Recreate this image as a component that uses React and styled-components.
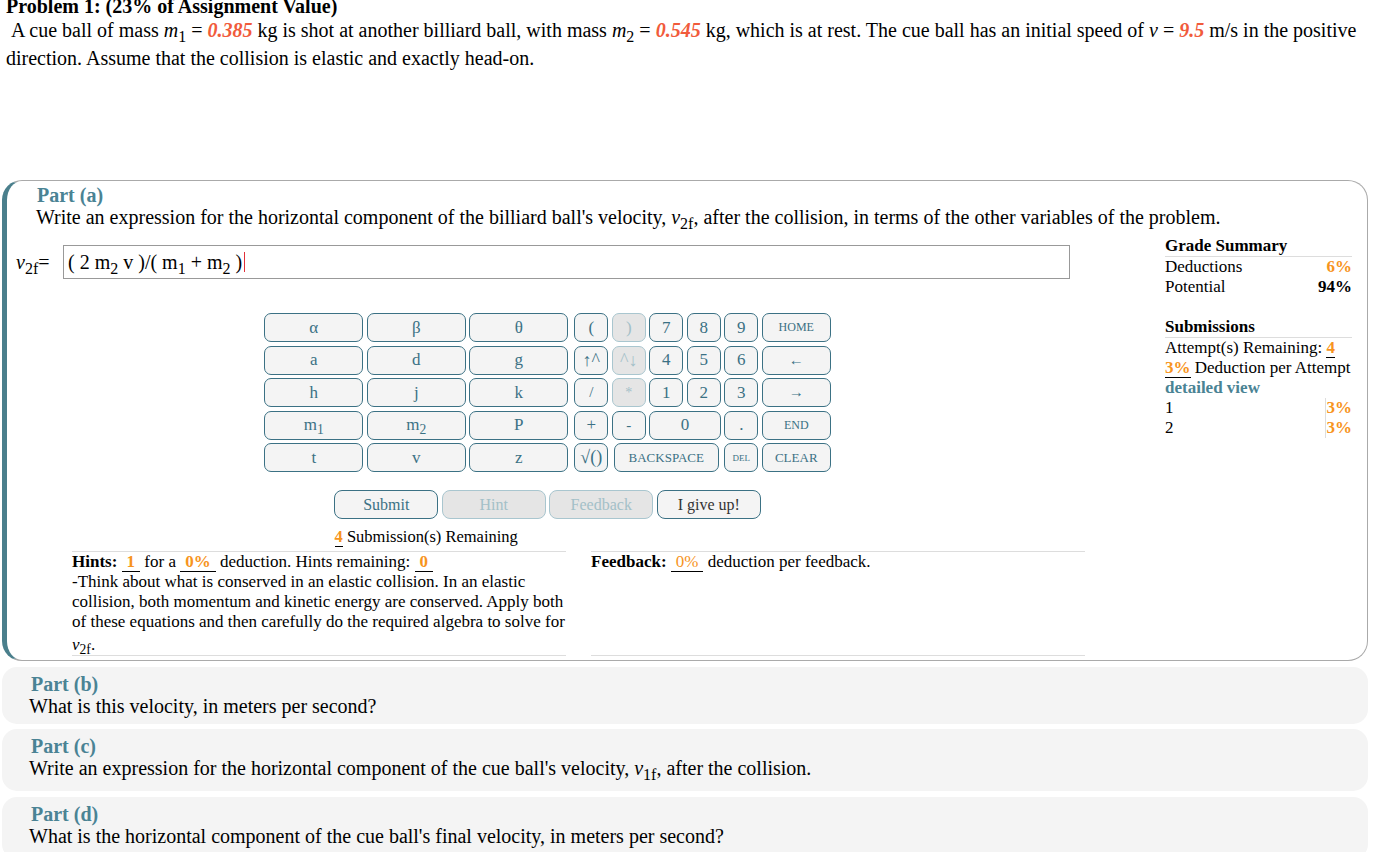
import React from 'react';
import styled, { createGlobalStyle } from 'styled-components';

const TEAL = '#4a8394',
	KEY_TEAL = '#3b7184',
	RED = '#f15b3b',
	ORANGE = '#f7941d';

const GlobalStyle = createGlobalStyle`
		body {
			margin: 0;
			background: #fff;
			color: #000;
			font-family: 'Liberation Serif', 'Times New Roman', serif;
		}
	`,
	Page = styled.div`
		width: 1366px;
		padding-left: 2px;
	`,
	Intro = styled.div`
		margin-top: -3px;
		padding-left: 4px;
		height: 183px;
	`,
	ProblemTitle = styled.div`
		font-weight: bold;
		font-size: 20px;
		line-height: 18px;
	`,
	Statement = styled.div`
		font-size: 20px;
		line-height: 28px;
		margin-top: 1px;
	`,
	Given = styled.span`
		color: ${RED};
		font-weight: bold;
		font-style: italic;
	`,
	Var = styled.i`
		font-style: italic;
	`,
	Sub = styled.sub`
		font-size: 0.8em;
		vertical-align: -0.3em;
		line-height: 0;
		font-style: normal;
	`,
	ActivePart = styled.section`
		box-sizing: border-box;
		height: 481px;
		border: 1px solid #aaa;
		border-left: 5px solid #4a7f8c;
		border-radius: 20px;
		padding: 3px 15px 0 9px;
	`,
	PartTitle = styled.div`
		color: ${TEAL};
		font-weight: bold;
		font-size: 20px;
		line-height: 22px;
		padding-left: ${( p ) => p.$indent || 0}px;
	`,
	Prompt = styled.div`
		font-size: 20px;
		line-height: 22px;
		padding-left: ${( p ) => p.$indent || 0}px;
	`,
	Workspace = styled.div`
		display: flex;
		margin-top: 8px;
	`,
	MainCol = styled.div`
		width: 1063px;
		display: flex;
		flex-direction: column;
		align-items: center;
	`,
	AnswerRow = styled.div`
		align-self: stretch;
		display: flex;
		align-items: center;
		margin-top: 9px;
	`,
	AnswerLabel = styled.div`
		width: 47px;
		font-size: 20px;
	`,
	AnswerBox = styled.div`
		box-sizing: border-box;
		width: 1007px;
		height: 34px;
		border: 1px solid #999;
		padding: 3px 0 0 4px;
		font-size: 20px;
		line-height: 26px;
	`,
	Caret = styled.span`
		display: inline-block;
		width: 1px;
		height: 20px;
		margin-left: 2px;
		vertical-align: -3px;
		background: #e0303a;
	`,
	Keypad = styled.div`
		display: flex;
		gap: 6px;
		margin-top: 34px;
	`,
	KeyGrid = styled.div`
		display: grid;
		grid-template-columns: ${( p ) => p.$cols};
		grid-auto-rows: 29px;
		gap: 3.5px;
	`,
	Key = styled.div`
		box-sizing: border-box;
		grid-column: span ${( p ) => p.$span || 1};
		display: flex;
		align-items: center;
		justify-content: center;
		border: 1.5px solid ${( p ) => ( p.$off ? '#a9c6cf' : KEY_TEAL )};
		border-radius: 7px;
		background: ${( p ) => ( p.$off ? '#e5e5e5' : '#f4f4f4' )};
		color: ${( p ) => ( p.$off ? '#a3c0c8' : KEY_TEAL )};
		font-size: ${( p ) => p.$size || 17}px;
		white-space: nowrap;
		margin: ${( p ) => ( p.$inset ? '0 2px' : 0 )};
	`,
	ActionRow = styled.div`
		display: flex;
		gap: 3.5px;
		margin-top: 18px;
	`,
	ActionButton = styled.div`
		box-sizing: border-box;
		width: 104px;
		height: 29px;
		display: flex;
		align-items: center;
		justify-content: center;
		border: 1.5px solid ${( p ) => ( p.$off ? '#a9c6cf' : KEY_TEAL )};
		border-radius: 8px;
		background: ${( p ) => ( p.$off ? '#e5e5e5' : '#f4f4f4' )};
		color: ${( p ) => ( p.$off ? '#a3c0c8' : p.$dark ? '#333' : KEY_TEAL )};
		font-size: 16px;
	`,
	Remaining = styled.div`
		width: 426px;
		font-size: 16.5px;
		line-height: 18px;
		margin-top: 9px;
	`,
	Value = styled.span`
		color: ${ORANGE};
		font-weight: ${( p ) => ( p.$light ? 'normal' : 'bold' )};
		border-bottom: 1px solid #000;
		padding: 0 ${( p ) => p.$pad ?? 5}px;
	`,
	InfoRow = styled.div`
		align-self: flex-start;
		display: flex;
		gap: 25px;
		margin: 5px 0 0 56px;
	`,
	InfoCol = styled.div`
		box-sizing: border-box;
		width: 494px;
		height: 105px;
		border-top: 1px solid #ddd;
		border-bottom: 1px solid #ddd;
		font-size: 17px;
		line-height: 20px;
	`,
	LastLine = styled.div`
		margin-top: 3px;
	`,
	Sidebar = styled.aside`
		width: 187px;
		margin-left: 86px;
		font-size: 17px;
		line-height: 20px;
	`,
	SideHeading = styled.div`
		font-weight: bold;
		border-bottom: 1px solid #ddd;
		margin-top: ${( p ) => p.$gap || 0}px;
	`,
	SideRow = styled.div`
		display: flex;
		justify-content: space-between;
	`,
	Pct = styled.b`
		color: ${( p ) => ( p.$plain ? '#000' : ORANGE )};
	`,
	DetailLink = styled.div`
		color: ${TEAL};
		font-weight: bold;
	`,
	AttemptCell = styled.span`
		color: ${ORANGE};
		font-weight: bold;
		border-left: 1px solid #ddd;
		padding-left: 1px;
	`,
	CollapsedPart = styled.section`
		box-sizing: border-box;
		height: ${( p ) => p.$height}px;
		margin-top: ${( p ) => p.$gap}px;
		background: #f4f4f4;
		border-radius: 15px;
		padding: 6px 0 0 27px;
	`;

const letterKeys = [
		'α', 'β', 'θ',
		'a', 'd', 'g',
		'h', 'j', 'k',
		<>m<Sub>1</Sub></>, <>m<Sub>2</Sub></>, 'P',
		't', 'v', 'z'
	],
	opKeys = [
		{ label: '(' }, { label: ')', off: true }, { label: '7' }, { label: '8' }, { label: '9' }, { label: 'HOME', size: 12 },
		{ label: '↑^', size: 18 }, { label: '^↓', off: true, size: 18 }, { label: '4' }, { label: '5' }, { label: '6' }, { label: '←', size: 15 },
		{ label: '/', size: 15 }, { label: '*', off: true, size: 14 }, { label: '1' }, { label: '2' }, { label: '3' }, { label: '→', size: 15 },
		{ label: '+' }, { label: '-', size: 15 }, { label: '0', span: 2 }, { label: '.' }, { label: 'END', size: 12 },
		{ label: '√()', size: 18 }, { label: 'BACKSPACE', span: 3, size: 13, inset: true }, { label: 'DEL', size: 9 }, { label: 'CLEAR', size: 13 }
	];

const App = () => {
	return (
		<Page>
			<GlobalStyle />
			<Intro>
				<ProblemTitle>Problem 1: (23% of Assignment Value)</ProblemTitle>
				<Statement>
					{'\u00a0'}A cue ball of mass <Var>m</Var><Sub>1</Sub> = <Given>0.385</Given> kg is shot at another billiard ball, with mass <Var>m</Var><Sub>2</Sub> = <Given>0.545</Given> kg, which is at rest. The cue ball has an initial speed of <Var>v</Var> = <Given>9.5</Given> m/s in the positive direction. Assume that the collision is elastic and exactly head-on.
				</Statement>
			</Intro>

			<ActivePart>
				<PartTitle $indent={21}>Part (a)</PartTitle>
				<Prompt $indent={20}>
					Write an expression for the horizontal component of the billiard ball's velocity, <Var>v</Var><Sub>2f</Sub>, after the collision, in terms of the other variables of the problem.
				</Prompt>
				<Workspace>
					<MainCol>
						<AnswerRow>
							<AnswerLabel><Var>v</Var><Sub>2f</Sub>=</AnswerLabel>
							<AnswerBox>
								( 2 m<Sub>2</Sub>&nbsp;v )/( m<Sub>1</Sub>&nbsp;+ m<Sub>2</Sub>&nbsp;)<Caret />
							</AnswerBox>
						</AnswerRow>

						{/* Keypad */}
						<Keypad>
							<KeyGrid $cols='99px 99px 99px'>
								{letterKeys.map( ( label, i ) => (
									<Key key={i}><span>{label}</span></Key>
								) )}
							</KeyGrid>
							<KeyGrid $cols='34px 34px 34px 34px 34px 69px'>
								{opKeys.map( ( k, i ) => (
									<Key key={i} $off={k.off} $span={k.span} $size={k.size} $inset={k.inset}>{k.label}</Key>
								) )}
							</KeyGrid>
						</Keypad>

						<ActionRow>
							<ActionButton>Submit</ActionButton>
							<ActionButton $off>Hint</ActionButton>
							<ActionButton $off>Feedback</ActionButton>
							<ActionButton $dark>I give up!</ActionButton>
						</ActionRow>
						<Remaining><Value $pad={0}>4</Value> Submission(s) Remaining</Remaining>

						{/* Hints and feedback */}
						<InfoRow>
							<InfoCol>
								<b>Hints:</b> <Value>1</Value> for a <Value>0%</Value> deduction. Hints remaining: <Value>0</Value>
								<br />
								-Think about what is conserved in an elastic collision. In an elastic collision, both momentum and kinetic energy are conserved. Apply both of these equations and then carefully do the required algebra to solve for
								<LastLine><Var>v</Var><Sub>2f</Sub>.</LastLine>
							</InfoCol>
							<InfoCol>
								<b>Feedback:</b> <Value $light>0%</Value> deduction per feedback.
							</InfoCol>
						</InfoRow>
					</MainCol>

					<Sidebar>
						<SideHeading>Grade Summary</SideHeading>
						<SideRow><span>Deductions</span><Pct>6%</Pct></SideRow>
						<SideRow><span>Potential</span><Pct $plain>94%</Pct></SideRow>
						<SideHeading $gap={20}>Submissions</SideHeading>
						<div>Attempt(s) Remaining: <Value $pad={0}>4</Value></div>
						<div><Value $pad={0}>3%</Value> Deduction per Attempt</div>
						<DetailLink>detailed view</DetailLink>
						<SideRow><span>1</span><AttemptCell>3%</AttemptCell></SideRow>
						<SideRow><span>2</span><AttemptCell>3%</AttemptCell></SideRow>
					</Sidebar>
				</Workspace>
			</ActivePart>

			<CollapsedPart $gap={6} $height={57}>
				<PartTitle $indent={2}>Part (b)</PartTitle>
				<Prompt>What is this velocity, in meters per second?</Prompt>
			</CollapsedPart>
			<CollapsedPart $gap={5} $height={62}>
				<PartTitle $indent={2}>Part (c)</PartTitle>
				<Prompt>Write an expression for the horizontal component of the cue ball's velocity, <Var>v</Var><Sub>1f</Sub>, after the collision.</Prompt>
			</CollapsedPart>
			<CollapsedPart $gap={6} $height={62}>
				<PartTitle $indent={2}>Part (d)</PartTitle>
				<Prompt>What is the horizontal component of the cue ball's final velocity, in meters per second?</Prompt>
			</CollapsedPart>
		</Page>
	);
};

export default App;
